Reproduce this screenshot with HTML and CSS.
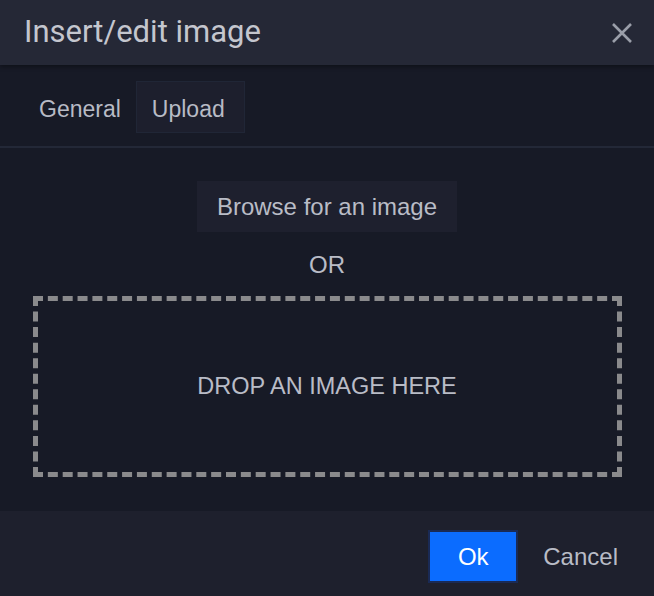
FILE: index.html
```html
<!DOCTYPE html>
<html>
<head>
<meta charset="utf-8">
<link rel="stylesheet" href="styles.css">
</head>
<body>
<div class="dialog">
  <header class="header">
    <h1 class="title">Insert/edit image</h1>
    <button class="close" aria-label="Close">
      <svg width="22" height="22" viewBox="0 0 22 22"><path d="M2 2L20 20M20 2L2 20" stroke="#9a9ea9" stroke-width="2.6" fill="none"/></svg>
    </button>
  </header>
  <nav class="tabs">
    <div class="tab">General</div>
    <div class="tab active">Upload</div>
  </nav>
  <main class="body">
    <button class="browse">Browse for an image</button>
    <div class="or">OR</div>
    <div class="drop">DROP AN IMAGE HERE</div>
  </main>
  <footer class="footer">
    <button class="ok">Ok</button>
    <button class="cancel">Cancel</button>
  </footer>
</div>
</body>
</html>
```
FILE: styles.css
```css
html, body {
  margin: 0;
  padding: 0;
  background: #171a26;
}
.dialog {
  width: 654px;
  height: 596px;
  display: flex;
  flex-direction: column;
  background: #171a26;
  font-family: "Liberation Sans", Arial, sans-serif;
  color: #b9bcc6;
}
.header {
  height: 65px;
  flex: none;
  background: #252836;
  display: flex;
  align-items: center;
  justify-content: space-between;
  padding: 0 21px 0 24px;
  box-sizing: border-box;
  box-shadow: 0 2px 4px rgba(0,0,0,0.35);
  position: relative;
  z-index: 1;
}
.title {
  margin: 0;
  font-family: Roboto, sans-serif;
  font-weight: 400;
  font-size: 31px;
  line-height: 36px;
  color: #c4c6ce;
  margin-top: -2px;
}
.close {
  background: none;
  border: 0;
  padding: 0;
  display: flex;
}
.tabs {
  flex: none;
  display: flex;
  align-items: flex-end;
  height: 83px;
  padding: 0 0 13px 24px;
  box-sizing: border-box;
  border-bottom: 2px solid #232837;
}
.tab {
  font-family: "Liberation Sans", Arial, sans-serif;
  font-size: 23px;
  color: #b8bbc5;
  height: 52px;
  display: flex;
  align-items: center;
  padding: 4px 15px 0;
  box-sizing: border-box;
  border: 0;
}
.tab.active {
  background: #1d1f2d;
  border: 1px solid #202636;
  padding: 4px 19px 0 15px;
}
.body {
  flex: 1;
  display: flex;
  flex-direction: column;
  align-items: center;
  padding: 33px 32px 0;
}
.browse {
  height: 51px;
  width: 260px;
  flex: none;
  background: #1e202e;
  border: 0;
  padding: 0;
  font-family: "Liberation Sans", Arial, sans-serif;
  font-size: 24px;
  color: #b9bcc6;
}
.or {
  font-size: 24px;
  margin-top: 21px;
  line-height: 24px;
}
.drop {
  margin-top: 19px;
  width: 589px;
  height: 181px;
  flex: none;
  box-sizing: border-box;
  border: 5px dashed #8a8a8c;
  display: flex;
  align-items: center;
  justify-content: center;
  font-size: 23.5px;
  color: #b9bcc6;
}
.footer {
  flex: none;
  height: 85px;
  background: #1e202d;
  display: flex;
  align-items: center;
  justify-content: flex-end;
  padding: 6px 36px 0 0;
  box-sizing: border-box;
}
.ok {
  width: 90px;
  height: 53px;
  background: #0b6cff;
  border: 2px solid #1a2a55;
  color: #ffffff;
  font-family: "Liberation Sans", Arial, sans-serif;
  font-size: 24px;
}
.cancel {
  margin-left: 25px;
  background: none;
  border: 0;
  padding: 0;
  font-family: "Liberation Sans", Arial, sans-serif;
  font-size: 24px;
  color: #b9bcc6;
}
```
